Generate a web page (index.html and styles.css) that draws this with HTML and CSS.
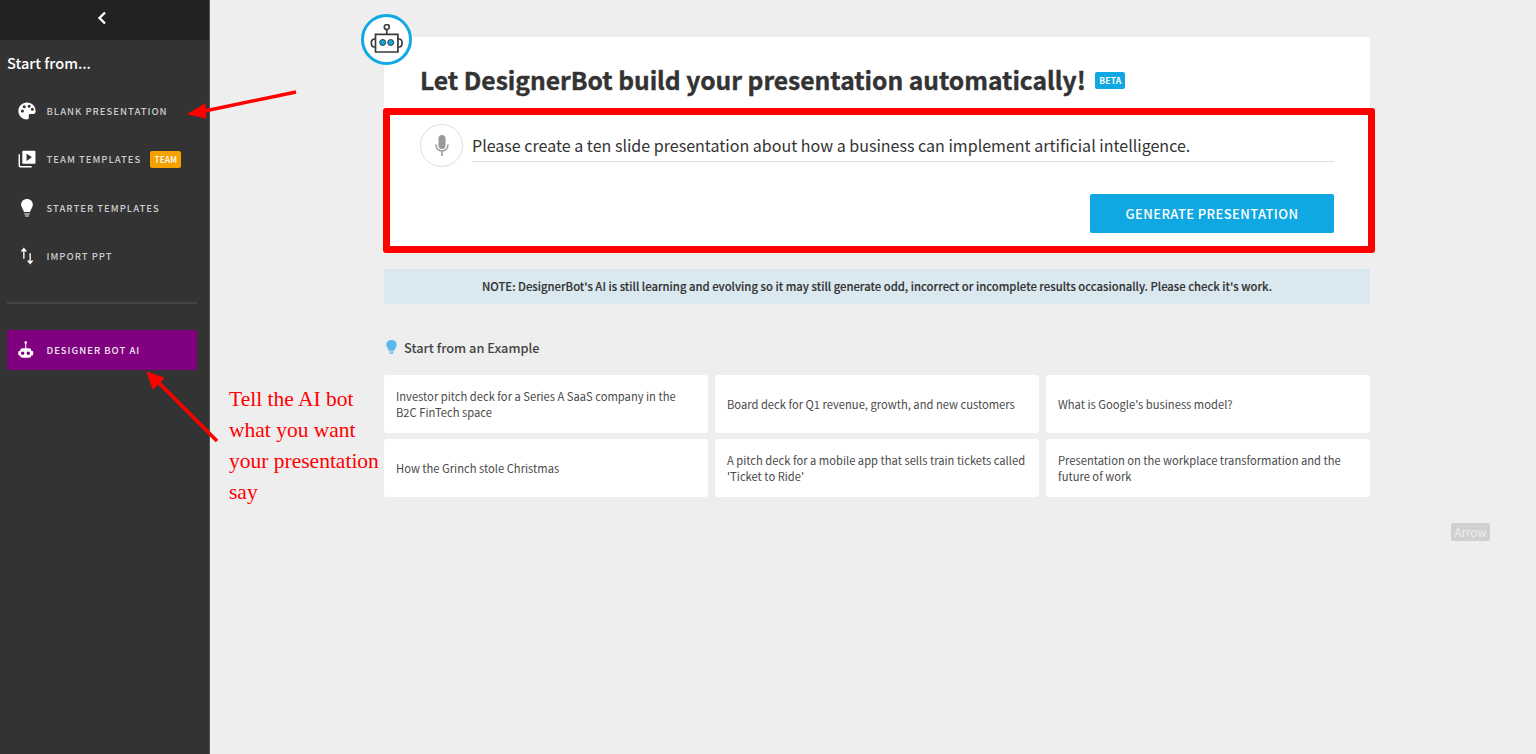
FILE: index.html
```html
<!DOCTYPE html>
<html lang="en">
<head>
    <meta charset="UTF-8">
    <meta name="viewport" content="width=device-width, initial-scale=1.0">
    <title>DesignerBot</title>
    <link rel="stylesheet" href="styles.css">
</head>
<body>
    <div class="app">
        <aside class="sidebar">
            <div class="sidebar-top">
                <svg class="back" width="10" height="14" viewBox="0 0 10 14"><path d="M8 1.500 2.500 7 8 12.500" fill="none" stroke="#fff" stroke-width="2.400"/></svg>
            </div>
            <div class="sidebar-title">Start from...</div>
            <nav class="menu">
                <a class="menu-item">
                    <svg class="menu-icon" viewBox="0 0 20 20"><path fill-rule="evenodd" fill="#fff" d="M10 .6C4.600.6.400 4.700.400 10s4.300 9.400 9.200 9.400c1.800 0 2.700-1.100 2.500-2.500-.2-1.500-.5-2.900 1-3.500 1.300-.5 2.800.1 4 0 1.500-.1 2.500-1.400 2.500-3.200C19.600 4.700 15.400.6 10 .6ZM4.900 11.700a1.700 1.700 0 1 1 0-3.400 1.700 1.700 0 0 1 0 3.400Zm2-4.700a1.700 1.700 0 1 1 0-3.400 1.700 1.700 0 0 1 0 3.400Zm5.500-.6a1.700 1.700 0 1 1 0-3.400 1.700 1.700 0 0 1 0 3.400Zm3.500 3.400a1.700 1.700 0 1 1 0-3.400 1.700 1.700 0 0 1 0 3.400Z"/></svg>
                    <span>BLANK PRESENTATION</span>
                </a>
                <a class="menu-item">
                    <svg class="menu-icon" viewBox="0 0 20 20"><path fill="#fff" d="M6 .8h12.200c.7 0 1.200.5 1.200 1.200v12.200c0 .7-.5 1.200-1.200 1.200H6c-.7 0-1.200-.5-1.200-1.200V2c0-.7.5-1.200 1.200-1.200Z"/><path fill="#333" d="M9.500 4v8.200l6-4.100Z"/><path fill="none" stroke="#fff" stroke-width="1.600" d="M1.400 4.800v12.400c0 .8.600 1.400 1.400 1.400h12.400"/></svg>
                    <span>TEAM TEMPLATES</span>
                    <span class="badge-team">TEAM</span>
                </a>
                <a class="menu-item">
                    <svg class="menu-icon" viewBox="0 0 20 20"><path fill="#fff" d="M10 0c-3.700 0-6.500 2.700-6.500 6.300 0 3.100 2.300 4.500 2.900 7.500.1.400.4.700.8.700h5.600c.4 0 .7-.3.800-.7.600-3 2.900-4.400 2.900-7.500C16.500 2.700 13.700 0 10 0ZM7 16h6v1.300H7Zm1 2.200h4V19.500H8Z"/></svg>
                    <span>STARTER TEMPLATES</span>
                </a>
                <a class="menu-item">
                    <svg class="menu-icon" viewBox="0 0 20 20"><path fill="none" stroke="#fff" stroke-width="1.500" d="M6.500 13V1.500M3.800 5l2.700-3.300L9.200 5M13.500 7v11.500M10.800 15l2.700 3.300 2.700-3.300"/></svg>
                    <span>IMPORT PPT</span>
                </a>
            </nav>
            <div class="divider"></div>
            <a class="menu-item active">
                <svg class="menu-icon" viewBox="0 0 20 20"><circle cx="8.600" cy="1.700" r="1.400" fill="#fff"/><path fill="#fff" d="M8 2h1.200v7H8z"/><path fill="#fff" fill-rule="evenodd" d="M5 8h7.200c1.500 0 2.500 1 2.500 2.500v.5h1c.7 0 1.200.5 1.200 1.200v2.600c0 .7-.5 1.200-1.200 1.200h-1c-.1 1.500-1 2.500-2.500 2.500H5c-1.500 0-2.400-1-2.500-2.500h-1c-.7 0-1.200-.5-1.200-1.200v-2.600c0-.7.5-1.200 1.200-1.200h1v-.5C2.500 9 3.500 8 5 8Zm.2 3.800a1.900 1.900 0 1 0 0 3.800 1.900 1.900 0 0 0 0-3.800Zm6.200 0a1.900 1.900 0 1 0 0 3.800 1.900 1.900 0 0 0 0-3.800Z"/></svg>
                <span>DESIGNER BOT AI</span>
            </a>
        </aside>

        <main class="main">
            <section class="prompt-card">
                <div class="bot-badge">
                    <svg width="36" height="32" viewBox="0 0 36 32"><g fill="none" stroke="#3a3a3a" stroke-width="1.700"><circle cx="17.800" cy="3" r="2.500"/><path d="M17.800 5.500v4.800M6.500 10.300h22.400v17.700H6.500zM6.500 15H5.500c-2 0-3.200 1.600-3.200 4s1.200 4 3.200 4h1M28.900 15h1c2 0 3.200 1.600 3.200 4s-1.200 4-3.200 4h-1"/></g><circle cx="13.700" cy="18.500" r="3" fill="#10a8e3" stroke="#3a3a3a" stroke-width="1"/><circle cx="21.700" cy="18.500" r="3" fill="#10a8e3" stroke="#3a3a3a" stroke-width="1"/></svg>
                </div>
                <h1 class="prompt-title">Let DesignerBot build your presentation automatically! <span class="badge-beta">BETA</span></h1>
                <div class="prompt-row">
                    <div class="mic">
                        <svg width="14" height="22" viewBox="0 0 14 22"><rect x="3.500" y="0" width="7" height="14" rx="3.500" fill="#999"/><path d="M1 9.500c0 3.800 2.500 6.500 6 6.500s6-2.700 6-6.500M7 16v5" fill="none" stroke="#999" stroke-width="1.600"/></svg>
                    </div>
                    <div class="prompt-input">Please create a ten slide presentation about how a business can implement artificial intelligence.</div>
                </div>
                <div class="prompt-actions">
                    <button class="generate">GENERATE PRESENTATION</button>
                </div>
            </section>

            <div class="note">NOTE: DesignerBot's AI is still learning and evolving so it may still generate odd, incorrect or incomplete results occasionally. Please check it's work.</div>

            <h2 class="examples-title">
                <svg width="11" height="14" viewBox="0 0 11 14"><path fill="#5bb8e8" d="M5.500 0C2.400 0 .3 2 .3 4.700c0 2.300 1.700 3.300 2.200 5.500.1.300.3.500.6.500h4.800c.3 0 .5-.2.600-.5.500-2.200 2.200-3.200 2.200-5.500C10.700 2 8.600 0 5.500 0ZM3.200 11.500h4.600v1H3.200Zm.8 1.600h3v.9H4Z"/></svg>
                Start from an Example
            </h2>

            <div class="examples">
                <div class="example">Investor pitch deck for a Series A SaaS company in the B2C FinTech space</div>
                <div class="example">Board deck for Q1 revenue, growth, and new customers</div>
                <div class="example">What is Google's business model?</div>
                <div class="example">How the Grinch stole Christmas</div>
                <div class="example">A pitch deck for a mobile app that sells train tickets called 'Ticket to Ride'</div>
                <div class="example">Presentation on the workplace transformation and the future of work</div>
            </div>
        </main>
    </div>

    <!-- annotations drawn over the screenshot -->
    <div class="red-box"></div>
    <svg class="arrows" width="400" height="460" viewBox="0 0 400 460">
        <path d="M296 92 200 112" stroke="#f00" stroke-width="3.500" fill="none"/>
        <path d="M188 114 205 104 206 118Z" fill="#f00" stroke="#f00" stroke-width="1"/>
        <path d="M217 441 156 380" stroke="#f00" stroke-width="3.500" fill="none"/>
        <path d="M147 372 164 378 153 389Z" fill="#f00" stroke="#f00" stroke-width="1"/>
    </svg>
    <div class="red-note">Tell the AI bot<br>what you want<br>your presentation<br>say</div>
    <div class="arrow-tag">Arrow</div>
</body>
</html>
```

FILE: styles.css
```css
* {
    box-sizing: border-box;
}

body {
    margin: 0;
    height: 754px;
    overflow: hidden;
    background: #eee;
    color: #333;
    font-family: "Noto Sans CJK SC", "Noto Sans", sans-serif;
    position: relative;
}

.app {
    display: flex;
    height: 754px;
}

/* sidebar */
.sidebar {
    width: 210px;
    flex: none;
    background: #333;
    border-right: 1px solid #555;
}

.sidebar-top {
    height: 40px;
    background: #222;
    display: flex;
    align-items: center;
    justify-content: center;
    padding-bottom: 4px;
    padding-right: 5px;
}

.sidebar-title {
    margin: 12px 0 0 7px;
    font-size: 14.600px;
    line-height: 22px;
    font-weight: 500;
    color: #fff;
}

.menu {
    margin-top: 12.500px;
}

.menu-item {
    display: flex;
    align-items: center;
    height: 48.500px;
    padding-left: 18px;
    font-size: 9.500px;
    font-weight: 500;
    letter-spacing: 1px;
    color: #ccc;
}

.menu-icon {
    width: 18px;
    height: 18px;
    flex: none;
    margin-right: 10.500px;
}

.badge-team {
    margin-left: 9px;
    width: 31px;
    text-align: center;
    height: 17px;
    line-height: 17px;
    background: #f5a100;
    border-radius: 2px;
    color: #fff;
    font-size: 8.500px;
    letter-spacing: 0;
}

.divider {
    height: 2px;
    margin: 21.500px 12px 0 7px;
    background: #444;
}

.menu-item.active {
    height: 40px;
    margin: 26px 12px 0 7px;
    padding-left: 11px;
    background: #800080;
    border-radius: 2px;
    color: #eee;
}

/* main column */
.main {
    flex: 1;
    padding: 37px 166px 0 174px;
}

.prompt-card {
    position: relative;
    height: 213px;
    padding: 0 36px;
    background: #fff;
    border-radius: 3px;
}

.bot-badge {
    position: absolute;
    left: -23px;
    top: -23px;
    width: 51px;
    height: 51px;
    background: #fff;
    border: 3px solid #10a8e3;
    border-radius: 50%;
    display: flex;
    align-items: center;
    justify-content: center;
}

.prompt-title {
    margin: 0;
    padding-top: 25px;
    font-size: 24.600px;
    line-height: 34px;
    font-weight: 700;
    color: #333;
    -webkit-text-stroke: 0.4px #333;
}

.badge-beta {
    display: inline-block;
    vertical-align: 6px;
    margin-left: 4px;
    width: 30px;
    text-align: center;
    height: 17px;
    line-height: 17px;
    background: #10a8e3;
    border-radius: 2px;
    color: #fff;
    font-size: 8.500px;
    letter-spacing: 0.2px;
    -webkit-text-stroke: 0;
}

.prompt-row {
    display: flex;
    margin-top: 28px;
}

.mic {
    width: 43px;
    height: 43px;
    flex: none;
    border: 1px solid #ddd;
    border-radius: 50%;
    display: flex;
    align-items: center;
    justify-content: center;
}

.prompt-input {
    flex: 1;
    margin-left: 9px;
    height: 38px;
    border-bottom: 1px solid #ddd;
    font-size: 16.040px;
    line-height: 42px;
    color: #333;
}

.prompt-actions {
    display: flex;
    justify-content: flex-end;
    margin-top: 27px;
}

.generate {
    width: 244px;
    height: 39px;
    border: none;
    border-radius: 2px;
    background: #10a8e3;
    color: #fff;
    font-family: inherit;
    font-size: 13px;
    font-weight: 500;
    letter-spacing: 0.4px;
}

.note {
    margin-top: 19px;
    height: 35px;
    line-height: 35px;
    background: #dae8f0;
    text-align: center;
    font-size: 11.300px;
    font-weight: 500;
    color: #333;
    -webkit-text-stroke: 0.15px #333;
}

.examples-title {
    display: flex;
    align-items: center;
    gap: 7px;
    margin: 32px 0 0 2px;
    height: 22px;
    font-size: 12.800px;
    font-weight: 500;
    color: #444;
}

.examples {
    display: grid;
    grid-template-columns: repeat(3, 1fr);
    gap: 6px 7px;
    margin-top: 17px;
}

.example {
    height: 58px;
    padding: 0 12px;
    display: flex;
    align-items: center;
    background: #fff;
    border-radius: 3px;
    font-size: 11.200px;
    line-height: 16px;
    color: #4a4a4a;
}

/* annotations */
.red-box {
    position: absolute;
    left: 383px;
    top: 108px;
    width: 992px;
    height: 145px;
    border: 7px solid #f00;
    border-radius: 3px;
}

.arrows {
    position: absolute;
    left: 0;
    top: 0;
}

.red-note {
    position: absolute;
    left: 229px;
    top: 384px;
    font-family: "Liberation Serif", serif;
    font-size: 21.500px;
    line-height: 31px;
    color: #f00;
    white-space: nowrap;
}

.arrow-tag {
    position: absolute;
    left: 1451px;
    top: 523px;
    width: 39px;
    height: 18px;
    line-height: 18px;
    text-align: center;
    background: #d0d0d0;
    border-radius: 2px;
    color: #eee;
    font-size: 11.500px;
}
```
